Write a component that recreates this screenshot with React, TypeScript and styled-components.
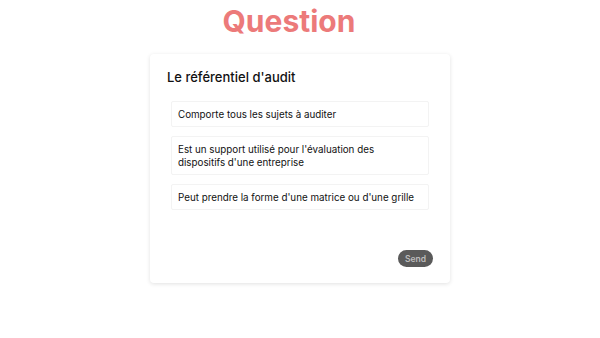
import styled, { createGlobalStyle } from "styled-components";

const GlobalStyle = createGlobalStyle`
  body {
    margin: 0;
    background: #ffffff;
    font-family: Inter, "Noto Sans", sans-serif;
  }
`;

const Page = styled.div`
  width: 600px;
  height: 338px;
  display: flex;
  flex-direction: column;
  align-items: center;
`;

const Title = styled.h1`
  margin: 2px 0 14px -22px;
  font-size: 30px;
  line-height: 38px;
  font-weight: 700;
  color: #ec7a7a;
`;

const Card = styled.section`
  box-sizing: border-box;
  width: 300px;
  height: 229px;
  padding: 15px 21px 16px 17px;
  display: flex;
  flex-direction: column;
  background: #ffffff;
  border-radius: 4px;
  box-shadow: 0 1px 4px rgba(0, 0, 0, 0.12);
`;

const Heading = styled.h2`
  margin: 0 0 16px;
  font-size: 13px;
  line-height: 16px;
  font-weight: 500;
  color: #111;
`;

const Options = styled.div`
  display: flex;
  flex-direction: column;
  gap: 9px;
  padding-left: 4px;
`;

const Option = styled.div`
  box-sizing: border-box;
  padding: 6px 6px 5px;
  font-size: 9.8px;
  line-height: 13px;
  color: #111;
  border: 1px solid #f3f3f3;
  border-radius: 2px;
  min-height: 26px;
`;

const Footer = styled.div`
  margin-top: auto;
  display: flex;
  justify-content: flex-end;
  margin-right: -4px;
`;

const SendButton = styled.button`
  border: none;
  height: 17px;
  padding: 0 7px;
  border-radius: 9px;
  background: #5a5a5a;
  color: #bdbdbd;
  font-family: Inter, sans-serif;
  font-size: 8.5px;
  font-weight: 600;
`;

const OPTIONS = [
  "Comporte tous les sujets à auditer",
  "Est un support utilisé pour l'évaluation des dispositifs d'une entreprise",
  "Peut prendre la forme d'une matrice ou d'une grille",
];

export default function App() {
  return (
    <Page>
      <GlobalStyle />
      <Title>Question</Title>
      <Card>
        <Heading>Le référentiel d'audit</Heading>
        <Options>
          {OPTIONS.map((text) => (
            <Option key={text}>{text}</Option>
          ))}
        </Options>
        <Footer>
          <SendButton>Send</SendButton>
        </Footer>
      </Card>
    </Page>
  );
}
